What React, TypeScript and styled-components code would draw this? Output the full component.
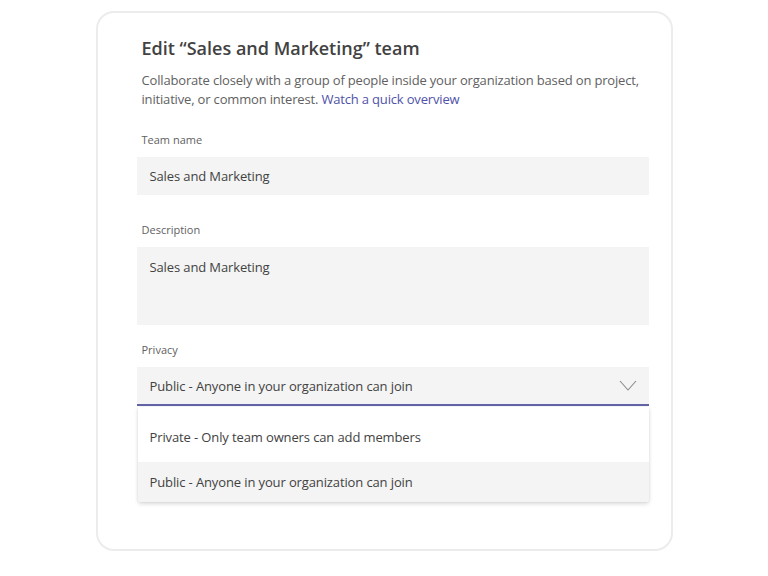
import React from "react";
import styled, { createGlobalStyle } from "styled-components";

const Global = createGlobalStyle`
  html, body { margin: 0; padding: 0; background: #ffffff; }
  body { font-family: "Open Sans", "Noto Sans", sans-serif; color: #424242; }
  * { box-sizing: border-box; }
`;

const Card = styled.div`
  width: 577px;
  height: 540px;
  margin: 11px auto 0;
  border: 2px solid #ececec;
  border-radius: 18px;
  padding: 23px 22px 0 39px;
  display: flex;
  flex-direction: column;
`;

const Title = styled.h1`
  margin: 0 0 0 5px;
  font-size: 18px;
  line-height: 24px;
  font-weight: 600;
  color: #424242;
`;

const Intro = styled.p`
  margin: 11px 0 0 5px;
  font-size: 13px;
  line-height: 19px;
  letter-spacing: -0.17px;
  color: #616161;
`;

const Link = styled.a`
  color: #4f52a8;
  text-decoration: none;
`;

const Field = styled.div<{ $top: number }>`
  margin-top: ${(p) => p.$top}px;
  display: flex;
  flex-direction: column;
  position: relative;
`;

const Label = styled.label`
  margin: 0 0 9px 5px;
  font-size: 11px;
  line-height: 16px;
  color: #616161;
`;

const Box = styled.div<{ $h: number; $align: "center" | "start"; $focused?: boolean }>`
  height: ${(p) => p.$h}px;
  background: #f4f4f4;
  padding: ${(p) => (p.$align === "center" ? "0 12px 0 13px" : "10px 12px 0 13px")};
  display: flex;
  align-items: ${(p) => (p.$align === "center" ? "center" : "flex-start")};
  justify-content: space-between;
  font-size: 13px;
  line-height: 20px;
  letter-spacing: -0.12px;
  color: #424242;
  border-bottom: ${(p) => (p.$focused ? "2px solid #6264a7" : "none")};
`;

const Menu = styled.ul`
  position: absolute;
  left: 1px;
  right: 0;
  top: calc(100% + 1px);
  margin: 0;
  padding: 10px 0 0;
  list-style: none;
  background: #ffffff;
  box-shadow: 0 2px 4px rgba(0, 0, 0, 0.14), 0 0 2px rgba(0, 0, 0, 0.1);
  border-radius: 0 0 3px 3px;
  display: flex;
  flex-direction: column;
  gap: 5px;
`;

const Option = styled.li<{ $hover?: boolean }>`
  height: 40px;
  padding: 0 12px 0 12px;
  display: flex;
  align-items: center;
  font-size: 13px;
  letter-spacing: -0.12px;
  color: #424242;
  background: ${(p) => (p.$hover ? "#f4f4f4" : "#ffffff")};
  border-radius: ${(p) => (p.$hover ? "0 0 3px 3px" : "0")};
`;

const Chevron = () => (
  <svg width="18" height="11" viewBox="0 0 18 11" fill="none">
    <polyline points="1,1 9,10 17,1" stroke="#8a8a8a" strokeWidth="1.1" fill="none" />
  </svg>
);

export default function App() {
  return (
    <>
      <Global />
      <Card>
        <Title>Edit “Sales and Marketing” team</Title>
        <Intro>
          Collaborate closely with a group of people inside your organization based on project,
          initiative, or common interest. <Link href="#">Watch a quick overview</Link>
        </Intro>
        <Field $top={23}>
          <Label>Team name</Label>
          <Box $h={38} $align="center">Sales and Marketing</Box>
        </Field>
        <Field $top={27}>
          <Label>Description</Label>
          <Box $h={78} $align="start">Sales and Marketing</Box>
        </Field>
        <Field $top={17}>
          <Label>Privacy</Label>
          <Box $h={39} $align="center" $focused>
            <span>Public - Anyone in your organization can join</span>
            <Chevron />
          </Box>
          <Menu>
            <Option>Private - Only team owners can add members</Option>
            <Option $hover>Public - Anyone in your organization can join</Option>
          </Menu>
        </Field>
      </Card>
    </>
  );
}
